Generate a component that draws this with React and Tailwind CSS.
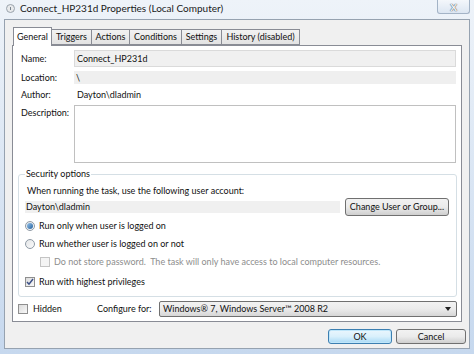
import React from "react";

const Radio = ({ checked }) => (
  <span className="w-[10px] h-[10px] rounded-full border border-[#8f9aa5] bg-gradient-to-br from-[#e4e6e8] to-[#fafafa] flex items-center justify-center shrink-0">
    {checked && (
      <span className="w-[6px] h-[6px] rounded-full bg-gradient-to-br from-[#9ac6ec] to-[#1d5f9c]" />
    )}
  </span>
);

const Check = ({ checked, disabled }) => (
  <span
    className={`w-[10px] h-[10px] border flex items-center justify-center shrink-0 ${
      disabled ? "border-[#c4c4c4] bg-[#f4f4f4]" : "border-[#8f8f8f] bg-gradient-to-br from-[#dcdcdc] to-[#f8f8f8]"
    }`}
  >
    {checked && (
      <svg width="8" height="8" viewBox="0 0 8 8">
        <path d="M1 4 L3 6.2 L7 1" fill="none" stroke="#3b4f86" strokeWidth="1.5" />
      </svg>
    )}
  </span>
);

const tabs = [
  ["Triggers", "w-[40px]"],
  ["Actions", "w-[38px]"],
  ["Conditions", "w-[52px]"],
  ["Settings", "w-[40px]"],
  ["History (disabled)", "w-[78px]"],
];

export default function App() {
  return (
    <div
      className="w-[474px] h-[354px] overflow-hidden flex flex-col bg-gradient-to-b from-[#eef3f9] to-[#c6d8ee] text-[#111] text-[9px] whitespace-nowrap"
      style={{ fontFamily: 'Lato, "Noto Sans", sans-serif' }}
    >
      {/* title bar */}
      <div className="h-[19px] flex items-start shrink-0">
        <div className="flex items-center h-[17px] pl-[6px]">
          <span className="w-[9px] h-[9px] rounded-full border border-[#9aa3ad] bg-[#e8eaec] flex items-center justify-center">
            <span className="w-[1px] h-[3px] bg-[#7b8590] -mt-[1px]" />
          </span>
          <span className="ml-[5px] text-[10px] text-[#1a1a1a]">Connect_HP231d Properties (Local Computer)</span>
        </div>
        <div className="ml-auto mr-[4px] w-[33px] h-[14px] border border-t-0 border-[#a3b3c6] rounded-b-[3px] bg-gradient-to-b from-[#f4f7fb] to-[#dce6f2] flex items-center justify-center">
          <span className="text-[10px] leading-none text-[#f8f8f8] font-bold [text-shadow:0_0_1px_#3d4a5a,0_0_1px_#3d4a5a]">X</span>
        </div>
      </div>

      {/* client area */}
      <div className="mx-[4px] h-[330px] bg-[#f0f0f0] border border-[#96a2b0] flex flex-col px-[7px] shrink-0">
        {/* tabs */}
        <div className="flex items-end h-[25px] pl-[1px]">
          <div className="w-[39px] h-[19px] bg-white border border-b-0 border-[#898c95] flex items-center justify-center relative -mb-[1px] z-10">
            General
          </div>
          {tabs.map(([t, w]) => (
            <div
              key={t}
              className={`${w} h-[16px] border border-l-0 border-[#898c95] bg-gradient-to-b from-[#f2f2f2] to-[#e3e3e3] flex items-center justify-center`}
            >
              {t}
            </div>
          ))}
        </div>

        {/* tab panel */}
        <div className="h-[277px] bg-white border border-[#898c95] flex flex-col pl-[8px] pr-[5px]">
          <div className="mt-[4px] h-[17px] flex items-center">
            <span className="w-[53px]">Name:</span>
            <div className="flex-1 h-full bg-[#f0f0f0] border border-[#dadada] flex items-center pl-[2px]">Connect_HP231d</div>
          </div>
          <div className="mt-[4px] h-[13px] flex items-center">
            <span className="w-[53px]">Location:</span>
            <div className="flex-1 h-full bg-[#efefef] flex items-center pl-[2px]">\</div>
          </div>
          <div className="mt-[4px] h-[14px] flex items-center">
            <span className="w-[53px]">Author:</span>
            <div className="flex-1 pl-[3px]">Dayton\dladmin</div>
          </div>
          <div className="mt-[3px] h-[58px] flex">
            <span className="w-[53px] pt-[1px]">Description:</span>
            <div className="flex-1 h-full bg-white border border-[#c0c0c0]" />
          </div>

          {/* security options group */}
          <div className="relative mt-[11px] -ml-[3px] -mr-[1px] h-[123px] border border-[#d5dfe5] rounded-[3px] flex flex-col pl-[6px] pr-[7px]">
            <span className="absolute -top-[8px] left-[6px] bg-white px-[1px]">Security options</span>
            <div className="mt-[10px] h-[12px] flex items-center pl-[2px]">
              When running the task, use the following user account:
            </div>
            <div className="mt-[1px] h-[18px] flex items-center">
              <div className="w-[315px] h-[12px] bg-[#f0f0f0] flex items-center pl-[1px]">Dayton\dladmin</div>
              <button className="ml-[5px] w-[104px] h-[18px] border border-[#707070] rounded-[3px] bg-gradient-to-b from-[#f2f2f2] via-[#ebebeb] to-[#cfcfcf] flex items-center justify-center">
                Change User or Group...
              </button>
            </div>
            <div className="mt-[3px] h-[14px] flex items-center">
              <Radio checked />
              <span className="ml-[4px]">Run only when user is logged on</span>
            </div>
            <div className="mt-[4px] h-[14px] flex items-center">
              <Radio />
              <span className="ml-[4px]">Run whether user is logged on or not</span>
            </div>
            <div className="mt-[4px] h-[14px] flex items-center pl-[15px] text-[#8d8d8d]">
              <Check disabled />
              <span className="ml-[4px]">Do not store password.&nbsp; The task will only have access to local computer resources.</span>
            </div>
            <div className="mt-[6px] h-[14px] flex items-center">
              <Check checked />
              <span className="ml-[4px]">Run with highest privileges</span>
            </div>
          </div>

          {/* hidden / configure */}
          <div className="mt-[4px] h-[16px] flex items-center -ml-[3px] -mr-[1px]">
            <Check />
            <span className="ml-[5px] w-[64px]">Hidden</span>
            <span className="w-[62px]">Configure for:</span>
            <div className="flex-1 h-full border border-[#707070] rounded-[2px] bg-gradient-to-b from-[#f2f2f2] via-[#ebebeb] to-[#d6d6d6] flex items-center pl-[3px] pr-[5px]">
              <span className="flex-1">Windows® 7, Windows Server™ 2008 R2</span>
              <svg width="6" height="4" viewBox="0 0 6 4">
                <path d="M0 0 H6 L3 4 Z" fill="#222" />
              </svg>
            </div>
          </div>
        </div>

        {/* buttons */}
        <div className="mt-[7px] flex justify-end -mr-[4px]">
          <button className="w-[64px] h-[15px] border border-[#3c7fb1] rounded-[3px] bg-gradient-to-b from-[#eaf6fd] via-[#d9f0fc] to-[#a7d9f5] flex items-center justify-center shadow-[inset_0_0_0_1px_#bfe6fa]">
            OK
          </button>
          <button className="ml-[4px] w-[70px] h-[15px] border border-[#707070] rounded-[3px] bg-gradient-to-b from-[#f2f2f2] via-[#ebebeb] to-[#cfcfcf] flex items-center justify-center">
            Cancel
          </button>
        </div>
      </div>
    </div>
  );
}
